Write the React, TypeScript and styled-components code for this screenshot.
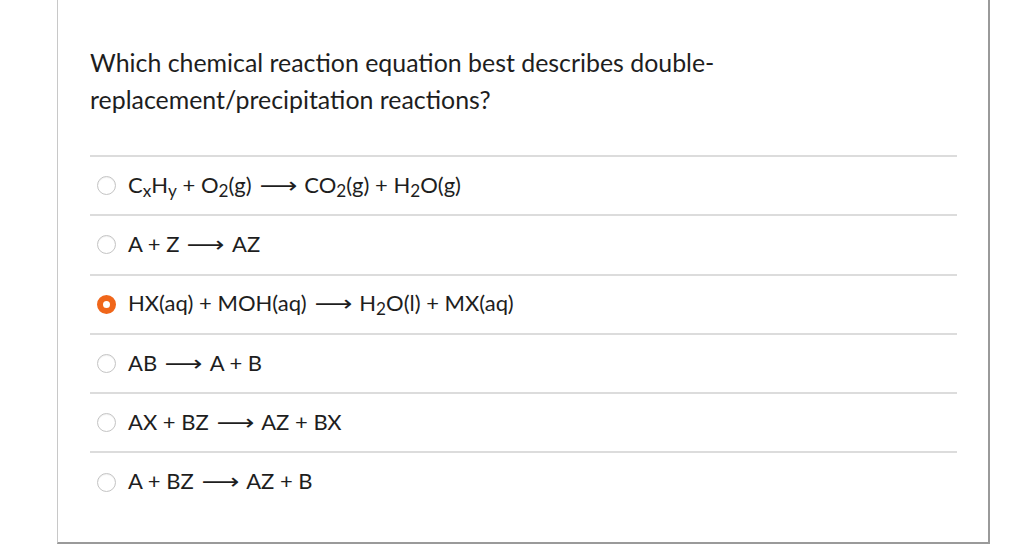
import styled, { createGlobalStyle } from "styled-components";

const GlobalStyle = createGlobalStyle`
  html, body {
    margin: 0;
    padding: 0;
    background: #ffffff;
  }
  body {
    font-family: Lato, "Noto Sans", "DejaVu Sans", sans-serif;
    color: #1e1e1e;
  }
`;

const Page = styled.div`
  width: 1024px;
  height: 560px;
  overflow: hidden;
`;

const QuestionBox = styled.div`
  box-sizing: border-box;
  margin: -4px 0 0 57px;
  width: 933px;
  height: 548px;
  border-left: 1px solid #c8c8c8;
  border-right: 2px solid #9a9a9a;
  border-bottom: 2px solid #9a9a9a;
  padding: 48px 31px 0 32px;
  background: #fff;
`;

const QuestionText = styled.p`
  margin: 0 0 37px 0;
  max-width: 740px;
  font-size: 24.9px;
  line-height: 37px;
`;

const AnswerList = styled.div`
  display: flex;
  flex-direction: column;
`;

const AnswerRow = styled.label`
  box-sizing: border-box;
  height: 59.3px;
  border-top: 2px solid #dcdcdc;
  padding-bottom: 3px;
  display: flex;
  align-items: center;
  gap: 12px;
  padding-left: 7px;
  font-size: 22px;
  cursor: pointer;
`;

const Radio = styled.span<{ $checked?: boolean }>`
  box-sizing: border-box;
  width: 19px;
  height: 19px;
  margin-top: 3px;
  border-radius: 50%;
  flex: none;
  border: ${(p) => (p.$checked ? "6px solid #f0661a" : "1px solid #c4c4c4")};
  background: #fff;
  box-shadow: ${(p) => (p.$checked ? "none" : "inset 0 1px 1px rgba(0,0,0,0.06)")};
`;

const Formula = styled.span`
  white-space: nowrap;
`;

const Sub = styled.sub`
  font-size: 0.78em;
  vertical-align: -0.25em;
  line-height: 0;
`;

const Arrow = styled.span`
  display: inline-block;
  font-family: "DejaVu Sans", sans-serif;
  font-size: 1em;
  transform: scaleX(1.2);
  margin: 0 10px 0 11px;
`;

type Option = { id: string; checked?: boolean; content: JSX.Element };

const options: Option[] = [
  {
    id: "a",
    content: (
      <>
        C<Sub>x</Sub>H<Sub>y</Sub> + O<Sub>2</Sub>(g)<Arrow>⟶</Arrow>CO<Sub>2</Sub>(g) + H
        <Sub>2</Sub>O(g)
      </>
    ),
  },
  {
    id: "b",
    content: (
      <>
        A + Z<Arrow>⟶</Arrow>AZ
      </>
    ),
  },
  {
    id: "c",
    checked: true,
    content: (
      <>
        HX(aq) + MOH(aq)<Arrow>⟶</Arrow>H<Sub>2</Sub>O(l) + MX(aq)
      </>
    ),
  },
  {
    id: "d",
    content: (
      <>
        AB<Arrow>⟶</Arrow>A + B
      </>
    ),
  },
  {
    id: "e",
    content: (
      <>
        AX + BZ<Arrow>⟶</Arrow>AZ + BX
      </>
    ),
  },
  {
    id: "f",
    content: (
      <>
        A + BZ<Arrow>⟶</Arrow>AZ + B
      </>
    ),
  },
];

const App = () => {
  return (
    <Page>
      <GlobalStyle />
      <QuestionBox>
        <QuestionText>
          Which chemical reaction equation best describes double-replacement/precipitation reactions?
        </QuestionText>
        <AnswerList>
          {options.map((o) => (
            <AnswerRow key={o.id}>
              <Radio $checked={o.checked} />
              <Formula>{o.content}</Formula>
            </AnswerRow>
          ))}
        </AnswerList>
      </QuestionBox>
    </Page>
  );
};

export default App;
